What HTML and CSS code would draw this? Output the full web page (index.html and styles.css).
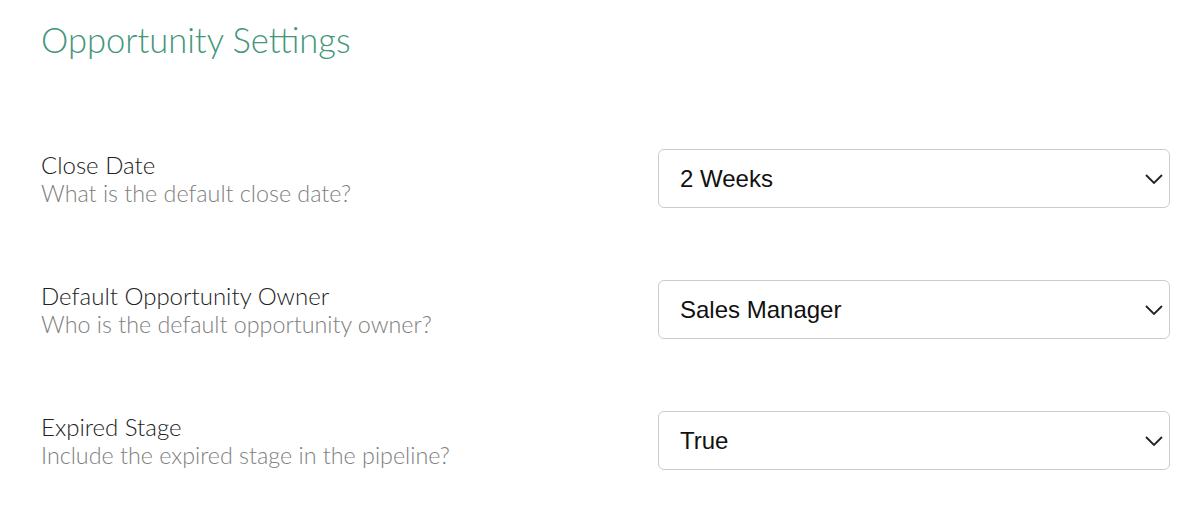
FILE: index.html
```html
<!DOCTYPE html>
<html lang="en">
<head>
  <meta charset="UTF-8" />
  <meta name="viewport" content="width=device-width, initial-scale=1.0" />
  <title>Opportunity Settings</title>
  <link rel="stylesheet" href="styles.css">
</head>
<body>
  <div class="settings">
    <h1>Opportunity Settings</h1>

    <div class="setting-row">
      <div class="setting-text">
        <div class="setting-label">Close Date</div>
        <div class="setting-desc">What is the default close date?</div>
      </div>
      <div class="select-wrap">
        <select>
          <option>2 Weeks</option>
          <option>1 Month</option>
          <option>3 Months</option>
        </select>
        <svg class="chevron" viewBox="0 0 18 10" width="18" height="10"><path d="M1 1l8 8 8-8" fill="none" stroke="#222" stroke-width="1.8"/></svg>
      </div>
    </div>

    <div class="setting-row">
      <div class="setting-text">
        <div class="setting-label">Default Opportunity Owner</div>
        <div class="setting-desc">Who is the default opportunity owner?</div>
      </div>
      <div class="select-wrap">
        <select>
          <option>Sales Manager</option>
          <option>Account Owner</option>
        </select>
        <svg class="chevron" viewBox="0 0 18 10" width="18" height="10"><path d="M1 1l8 8 8-8" fill="none" stroke="#222" stroke-width="1.8"/></svg>
      </div>
    </div>

    <div class="setting-row">
      <div class="setting-text">
        <div class="setting-label">Expired Stage</div>
        <div class="setting-desc">Include the expired stage in the pipeline?</div>
      </div>
      <div class="select-wrap">
        <select>
          <option>True</option>
          <option>False</option>
        </select>
        <svg class="chevron" viewBox="0 0 18 10" width="18" height="10"><path d="M1 1l8 8 8-8" fill="none" stroke="#222" stroke-width="1.8"/></svg>
      </div>
    </div>
  </div>
</body>
</html>
```

FILE: styles.css
```css
* {
  box-sizing: border-box;
  margin: 0;
  padding: 0;
}
body {
  font-family: 'Lato', 'Open Sans', sans-serif;
  background: #fff;
  color: #333;
}
.settings {
  padding: 18px 30px 0 41px;
}
h1 {
  font-size: 34.5px;
  font-weight: 300;
  color: #44967a;
  line-height: 44px;
  margin-bottom: 87px;
}
.setting-row {
  display: grid;
  grid-template-columns: 1fr 512px;
  align-items: center;
  margin-bottom: 72px;
}
.setting-row:last-child {
  margin-bottom: 0;
}
.setting-label {
  font-size: 24px;
  line-height: 29px;
  font-weight: 300;
  color: #222;
}
.setting-desc {
  font-size: 23.3px;
  line-height: 29px;
  font-weight: 300;
  color: #808080;
}
.select-wrap {
  position: relative;
}
select {
  appearance: none;
  -webkit-appearance: none;
  width: 100%;
  height: 59px;
  padding: 0 50px 0 21px;
  font-family: 'Liberation Sans', Arial, sans-serif;
  font-size: 24px;
  color: #111;
  background: #fff;
  border: 1px solid #ccc;
  border-radius: 6px;
}
.chevron {
  position: absolute;
  right: 7px;
  top: 25px;
  pointer-events: none;
}
```
